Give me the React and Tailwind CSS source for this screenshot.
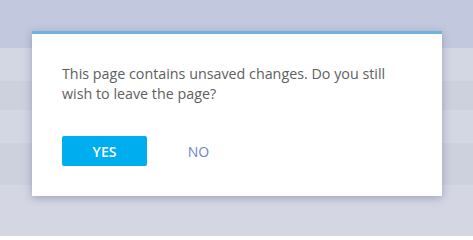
export default function App() {
  return (
    <div
      className="relative h-[236px] w-[473px] overflow-hidden bg-[#d4d6e3]"
      style={{ fontFamily: '"Open Sans", "Liberation Sans", sans-serif' }}
    >
      {/* page behind the overlay */}
      <div className="flex flex-col">
        <div className="h-[48px] bg-[#c2c9de]" />
        <div className="h-[33px] bg-[#d3d6e3]" />
        <div className="h-[29px] bg-[#cdd0dd]" />
        <div className="h-[33px] bg-[#d3d6e3]" />
        <div className="h-[42px] bg-[#cdd0dd]" />
        <div className="h-[51px] bg-[#d4d6e3]" />
      </div>

      <div className="absolute left-[32px] top-[31px] w-[410px] border-t-[3px] border-[#6cb5dc] bg-white px-[30px] pb-[30px] pt-[30px] shadow-[0_2px_8px_rgba(60,70,110,0.35)]">
        <p className="max-w-[335px] text-[14.3px] leading-[20px] text-[#606060]">
          This page contains unsaved changes. Do you still wish to leave the page?
        </p>
        <div className="mt-[32px] flex items-center gap-[9px]">
          <button className="h-[30px] w-[85px] rounded-[2px] bg-[#00aeef] text-[14px] font-semibold text-white">
            YES
          </button>
          <button className="h-[30px] w-[85px] text-[14px] text-[#6b82c5]">NO</button>
        </div>
      </div>
    </div>
  );
}
